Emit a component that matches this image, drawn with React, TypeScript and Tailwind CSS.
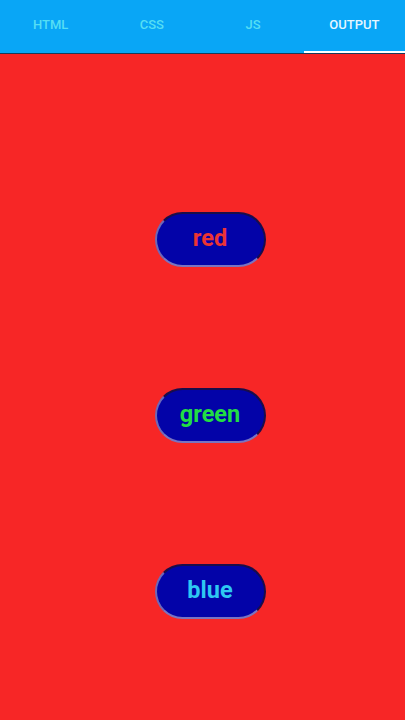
import React from 'react';

const tabs = ['HTML', 'CSS', 'JS', 'OUTPUT'];

const buttons = [
  { label: 'red', color: 'text-[#ec3434]' },
  { label: 'green', color: 'text-[#22dd44]' },
  { label: 'blue', color: 'text-[#2ec8f2]' },
];

export default function App() {
  return (
    <div className="w-[405px] h-[720px] flex flex-col bg-[#f72626] font-['Roboto',sans-serif] overflow-hidden">
      <div className="h-[54px] flex bg-[#09a6f6] border-b border-[#1a3a5a]">
        {tabs.map((tab, i) => {
          const active = i === tabs.length - 1;
          return (
            <div
              key={tab}
              className={`flex-1 flex items-center justify-center text-[13px] font-medium pb-[2px] border-b-2 ${
                active ? 'text-[#e6f6ff] border-white' : 'text-[#56def4] border-transparent'
              }`}
            >
              {tab}
            </div>
          );
        })}
      </div>
      <div className="flex flex-col items-center pt-[158px] gap-[121px] pl-[15px]">
        {buttons.map((b) => (
          <button
            key={b.label}
            className={`w-[111px] h-[55px] rounded-full bg-[#0303a8] border-2 border-t-[#1a0d4a] border-r-[#1a0d4a] border-b-[#7a74c0] border-l-[#6e68b8] text-[23.5px] font-bold leading-none pb-[2px] ${b.color}`}
          >
            {b.label}
          </button>
        ))}
      </div>
    </div>
  );
}
